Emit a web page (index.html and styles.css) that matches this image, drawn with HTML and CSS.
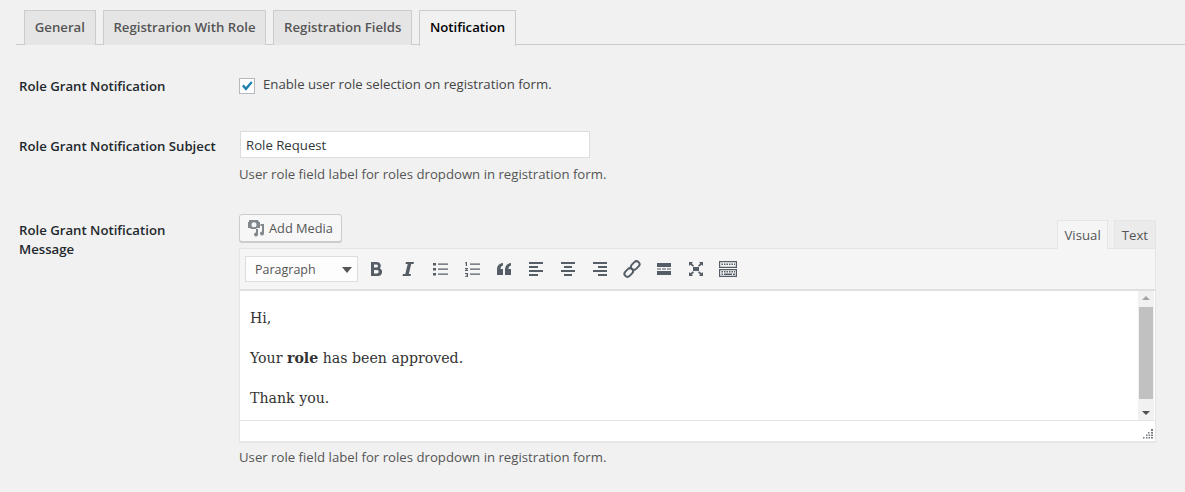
FILE: index.html
```html
<!DOCTYPE html>
<html lang="en">
<head>
<meta charset="utf-8">
<title>Notification settings</title>
<link rel="stylesheet" href="styles.css">
</head>
<body>
<nav class="tabs">
  <a class="tab">General</a>
  <a class="tab">Registrarion With Role</a>
  <a class="tab">Registration Fields</a>
  <a class="tab active">Notification</a>
</nav>
<div class="form">
  <div class="row row-check">
    <div class="label">Role Grant Notification</div>
    <div class="field check-field">
      <span class="checkbox"><svg viewBox="0 0 16 16" width="16" height="16"><path d="M3 8.300l1.700-1.700 2.200 2.300L12 3.200l1.600 1.600-6.600 8z" fill="#1e7fae"/></svg></span>
      <span class="check-text">Enable user role selection on registration form.</span>
    </div>
  </div>
  <div class="row row-subject">
    <div class="label">Role Grant Notification Subject</div>
    <div class="field">
      <div class="input">Role Request</div>
      <p class="hint">User role field label for roles dropdown in registration form.</p>
    </div>
  </div>
  <div class="row row-message">
    <div class="label">Role Grant Notification<br>Message</div>
    <div class="field editor-field">
      <div class="editor-top">
        <button class="media-btn">
          <svg viewBox="0 0 18 18" width="18" height="18"><path fill="#82878c" d="M2 1h9l1 2h1v6h-3a3 3 0 0 0-1 1H4L3 9H1V3h1zM7 3.200a2.500 2.500 0 1 0 0 5 2.500 2.500 0 0 0 0-5zM17 5v9.500a2 2 0 1 1-2-2V7h-1.500V5zM11 10v5.500a2 2 0 1 1-2-2v-3.500z"/></svg>
          <span>Add Media</span>
        </button>
        <div class="mode-tabs">
          <span class="mode visual">Visual</span>
          <span class="mode">Text</span>
        </div>
      </div>
      <div class="editor">
        <div class="toolbar">
          <div class="format">Paragraph<i class="caret"></i></div>
          <span class="tool"><svg viewBox="0 0 20 20"><path d="M5 3h6a4 4 0 0 1 3 6.500A4 4 0 0 1 12 17H5zm3 2.500v3h2.500a1.500 1.500 0 0 0 0-3zm0 5.500v3.500h3a1.700 1.700 0 0 0 0-3.500z" fill-rule="evenodd"/></svg></span>
          <span class="tool"><svg viewBox="0 0 20 20"><path d="M8 3h8l-.5 2h-2.300l-2.400 10h2.200l-.5 2H4.500l.5-2h2.300L9.700 5H7.500z"/></svg></span>
          <span class="tool"><svg viewBox="0 0 20 20"><path d="M3 4h3v2.500H3zM3 9h3v2.500H3zM3 14h3v2.500H3zM8 4.500h10V5.700H8zM8 9.500h10v1.200H8zM8 14.500h10v1.200H8z"/></svg></span>
          <span class="tool"><svg viewBox="0 0 20 20"><path d="M8 4.500h10V5.700H8zM8 9.500h10v1.200H8zM8 14.500h10v1.200H8zM3.500 3H5v4H3.800V4.200h-.6zM3 9h3v1l-1.600 1.100H6V12H3v-1l1.700-1.100H3zM3 14h3v4H3v-.8h1.900v-.8H3.800v-.7h1.100v-.8H3z"/></svg></span>
          <span class="tool"><svg viewBox="0 0 20 20"><path d="M9 4v2.500C7 7 6.500 8.500 6.500 10H9v6H3v-5.500C3 6.500 5.500 4.300 9 4zM17 4v2.500C15 7 14.500 8.500 14.500 10H17v6h-6v-5.500C11 6.500 13.500 4.300 17 4z"/></svg></span>
          <span class="tool"><svg viewBox="0 0 20 20"><path d="M3 3h14v2H3zM3 7h9v2H3zM3 11h14v2H3zM3 15h9v2H3z"/></svg></span>
          <span class="tool"><svg viewBox="0 0 20 20"><path d="M3 3h14v2H3zM6 7h8v2H6zM3 11h14v2H3zM6 15h8v2H6z"/></svg></span>
          <span class="tool"><svg viewBox="0 0 20 20"><path d="M3 3h14v2H3zM8 7h9v2H8zM3 11h14v2H3zM8 15h9v2H8z"/></svg></span>
          <span class="tool"><svg viewBox="0 0 20 20"><g fill="none" stroke="#555d66" stroke-width="2"><rect x="2" y="10.500" width="9.500" height="6" rx="3" transform="rotate(-45 6.750 13.500)"/><rect x="8.500" y="3.500" width="9.500" height="6" rx="3" transform="rotate(-45 13.250 6.500)"/></g></svg></span>
          <span class="tool"><svg viewBox="0 0 20 20"><path d="M3 4h14v4H3zM3 9.500h4v1H3zM8 9.500h4v1H8zM13 9.500h4v1h-4zM3 12h14v4H3z"/></svg></span>
          <span class="tool"><svg viewBox="0 0 20 20"><path d="M7 8h6v4H7zM3 3h4L5.800 4.200 8 6.800 7 7.800 4.300 5.700 3 7zM17 3v4l-1.300-1.300L13 7.800l-1-1 2.200-2.600L13 3zM3 17v-4l1.300 1.300L7 12.200l1 1-2.200 2.600L7 17zM17 17h-4l1.200-1.200L12 13.200l1-1 2.700 2.100L17 13z"/></svg></span>
          <span class="tool"><svg viewBox="0 0 20 20"><path fill-rule="evenodd" d="M1 2h18v7H1zm1.200 1.200v4.600h15.600V3.200zM3.500 4.500h1.500V6H3.500zM6 4.500h1.500V6H6zM8.500 4.500H10V6H8.500zM11 4.500h1.500V6H11zM13.500 4.500H15V6h-1.500zM16 4.500h1V6h-1zM1 10h18v8H1zm1.200 1.200v5.600h15.600v-5.600zM3.500 12h1.500v1.500H3.500zM6 12h1.500v1.500H6zM8.500 12H10v1.500H8.500zM11 12h1.500v1.500H11zM13.500 12H15v1.500h-1.500zM16 12h1v1.500h-1zM3.500 14.500H5V16H3.500zM6 14.500h8V16H6zM15 14.500h2V16h-2z"/></svg></span>
        </div>
        <div class="content-wrap">
          <div class="content">
            <p>Hi,</p>
            <p>Your <strong>role</strong> has been approved.</p>
            <p>Thank you.</p>
          </div>
          <div class="scrollbar">
            <i class="arrow up"></i>
            <div class="track"><div class="thumb"></div></div>
            <i class="arrow down"></i>
          </div>
        </div>
        <div class="status">
          <svg class="grip" viewBox="0 0 10 10" width="10" height="10"><path fill="#72777c" d="M8 0h2v2H8zM5 3h1.500v1.500H5zM8 3h2v1.500H8zM3 5.500h1.500V7H3zM5.500 5.500H7V7H5.500zM8 5.500h2V7H8zM0 8h1.500v1.500H0zM3 8h1.500v1.500H3zM5.500 8H7v1.500H5.500zM8 8h2v1.500H8z"/></svg>
        </div>
      </div>
      <p class="hint hint-editor">User role field label for roles dropdown in registration form.</p>
    </div>
  </div>
</div>
</body>
</html>
```
FILE: styles.css
```css
* { box-sizing: border-box; }
html, body { margin: 0; }
body {
  width: 1185px;
  height: 492px;
  overflow: hidden;
  background: #f1f1f1;
  font-family: "Open Sans", "Noto Sans", sans-serif;
  font-size: 13.200px;
  color: #444;
}
.tabs {
  display: flex;
  gap: 7px;
  height: 45px;
  margin-left: 16px;
  padding: 10px 0 0 8px;
  border-bottom: 1px solid #ccc;
}
.tab {
  height: 35px;
  padding: 0 9.750px;
  line-height: 33px;
  font-weight: 600;
  color: #555;
  background: #e5e5e5;
  border: 1px solid #ccc;
  border-bottom: 0;
}
.tab.active {
  height: 36px;
  color: #000;
  background: #f1f1f1;
}
.form { padding-left: 19px; }
.row { display: flex; }
.label {
  width: 220px;
  flex: none;
  font-weight: 600;
  line-height: 19px;
  color: #23282d;
}
.row-check { padding-top: 32px; height: 86px; }
.check-field { display: flex; align-items: flex-start; height: 20px; margin-top: -2px; }
.checkbox {
  width: 16px;
  height: 16px;
  margin: 3px 8px 0 0;
  background: #fff;
  border: 1px solid #b4b9be;
  display: flex;
  align-items: center;
  justify-content: center;
}
.checkbox svg { flex: none; }
.check-text { line-height: 20px; margin-top: -1px; }
.row-subject { height: 83px; align-items: flex-start; }
.row-subject .label { margin-top: 6px; }
.input {
  width: 350px;
  height: 27px;
  margin-left: 1px;
  padding-left: 5px;
  line-height: 27px;
  color: #32373c;
  background: #fff;
  border: 1px solid #ddd;
}
.hint { margin: 6px 0 0; line-height: 20px; color: #555; }
.row-message .label { margin-top: 7px; }
.editor-field { width: 917px; }
.editor-top { display: flex; justify-content: space-between; align-items: flex-end; height: 34px; }
.media-btn {
  display: flex;
  align-items: center;
  gap: 4px;
  width: 103px;
  height: 28px;
  margin-bottom: 6px;
  padding: 0 6px 0 7px;
  font: 12.800px "Open Sans", sans-serif;
  color: #555;
  white-space: nowrap;
  background: #f7f7f7;
  border: 1px solid #ccc;
  border-radius: 3px;
  box-shadow: 0 1px 0 #ccc;
}
.media-btn svg { flex: none; }
.mode-tabs { display: flex; gap: 6px; align-items: flex-end; }
.mode {
  height: 28px;
  padding: 0 7px;
  line-height: 28px;
  color: #555;
  background: #ebebeb;
  border: 1px solid #e5e5e5;
  border-bottom: 0;
}
.mode.visual { height: 29px; padding: 0 6px; background: #f5f5f5; margin-bottom: -1px; position: relative; }
.editor { background: #fff; border: 1px solid #e5e5e5; box-shadow: 0 1px 1px rgba(0,0,0,.04); }
.toolbar {
  display: flex;
  align-items: center;
  height: 42px;
  padding: 0 0 1px 5px;
  background: #f5f5f5;
  border-bottom: 2px solid #e0e0e0;
}
.format {
  position: relative;
  width: 113px;
  height: 26px;
  margin-right: 2px;
  padding-left: 9px;
  line-height: 26px;
  font-size: 12.500px;
  color: #555;
  background: #fdfdfd;
  border: 1px solid #ddd;
}
.caret {
  position: absolute;
  right: 5px;
  top: 10px;
  border: 5px solid transparent;
  border-top: 6px solid #555;
  border-bottom: 0;
}
.tool { width: 32px; height: 20px; display: flex; justify-content: center; flex: none; }
.tool svg { width: 20px; height: 20px; fill: #555d66; }
.content-wrap { display: flex; height: 129px; }
.content {
  flex: 1;
  padding: 17px 10px 0;
  font-family: "DejaVu Serif", "Liberation Serif", serif;
  font-size: 14.150px;
  line-height: 20px;
  color: #333;
}
.content p { margin: 0 0 20px; }
.scrollbar {
  width: 16px;
  margin-right: 1px;
  display: flex;
  flex-direction: column;
  align-items: center;
  background: #f1f1f1;
  padding: 5px 0;
}
.track { flex: 1; width: 100%; padding: 7px 1px 0; }
.thumb { height: 92px; background: #c1c1c1; }
.arrow { width: 0; height: 0; border: 4px solid transparent; }
.arrow.up { border-top: 0; border-bottom: 4px solid #a3a3a3; }
.arrow.down { border-bottom: 0; border-top: 4px solid #505050; margin-top: auto; }
.status {
  position: relative;
  height: 21px;
  border-top: 1px solid #e5e5e5;
  display: flex;
  justify-content: flex-end;
  align-items: flex-end;
  padding: 0 2px 2px 0;
}
.hint-editor { margin-top: 5px; }
```
